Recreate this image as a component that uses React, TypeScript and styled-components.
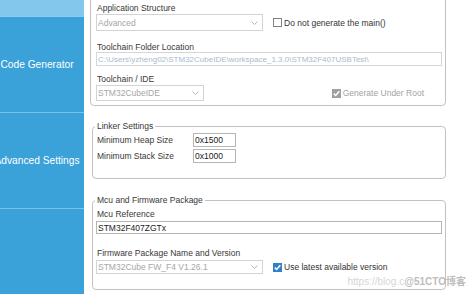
import React from 'react';
import styled, { createGlobalStyle } from 'styled-components';

const GlobalStyle = createGlobalStyle`
  body {
    margin: 0;
  }
`;

const Page = styled.div`
  position: relative;
  display: flex;
  width: 474px;
  height: 294px;
  overflow: hidden;
  background: #fff;
  font-family: 'Liberation Sans', Arial, sans-serif;
  font-size: 8.5px;
  color: #383838;
`;

const Sidebar = styled.div`
  width: 84px;
  flex: none;
  display: flex;
  flex-direction: column;
  background: #3aa1d9;
`;

const SideTop = styled.div`
  height: 16px;
  border-bottom: 1px solid #8ccbee;
  background: #84c7ec;
`;

const SideItem = styled.div`
  height: 95px;
  border-bottom: 1px solid #7cc1e9;
  padding-right: 10px;
  display: flex;
  align-items: center;
  justify-content: center;
  color: #fff;
  font-size: 10.2px;
  white-space: nowrap;
`;

const Main = styled.div`
  flex: 1;
  min-width: 0;
  display: flex;
  flex-direction: column;
  padding: 0 28px 0 6px;
`;

const Panel = styled.div`
  margin-top: -10px;
  padding: 12px 3px 4px 5px;
  border: 1px solid #c2c2c2;
  border-radius: 4px;
  display: flex;
  flex-direction: column;
`;

const Group = styled.fieldset<{ $top: number }>`
  margin: ${(p) => p.$top}px 0 0 2px;
  padding: 2px 3px 15px;
  border: 1px solid #c2c2c2;
  border-radius: 4px;
  min-width: 0;
  display: flex;
  flex-direction: column;
`;

const Legend = styled.legend`
  margin-left: -1px;
  padding: 0 2px;
  line-height: 10px;
  font-size: 8.5px;
  color: #383838;
`;

const Label = styled.div<{ $top?: number }>`
  margin-top: ${(p) => p.$top ?? 0}px;
  padding-left: 1px;
  line-height: 10px;
  white-space: nowrap;
`;

const Row = styled.div<{ $top?: number }>`
  margin-top: ${(p) => p.$top ?? 0}px;
  display: flex;
  align-items: center;
`;

const Select = styled.div<{ $width: number; $height: number }>`
  box-sizing: border-box;
  width: ${(p) => p.$width}px;
  height: ${(p) => p.$height}px;
  flex: none;
  padding: 0 4px 0 1px;
  border: 1px solid #d3d3d3;
  display: flex;
  align-items: center;
  justify-content: space-between;
  color: #a6a6a6;
  white-space: nowrap;
`;

const TextField = styled.div<{ $height: number; $top?: number; $muted?: boolean }>`
  box-sizing: border-box;
  margin-top: ${(p) => p.$top ?? 0}px;
  height: ${(p) => p.$height}px;
  padding: 0 1px;
  border: 1px solid ${(p) => (p.$muted ? '#d6d6d6' : '#b5b5b5')};
  display: flex;
  align-items: center;
  font-size: ${(p) => (p.$muted ? '8px' : 'inherit')};
  color: ${(p) => (p.$muted ? '#a9bbd0' : '#222')};
  white-space: nowrap;
  overflow: hidden;
`;

const CheckRow = styled.div<{ $left?: number; $right?: number; $disabled?: boolean }>`
  margin-left: ${(p) => (p.$left === undefined ? 'auto' : `${p.$left}px`)};
  margin-right: ${(p) => p.$right ?? 0}px;
  display: flex;
  align-items: center;
  gap: 2px;
  color: ${(p) => (p.$disabled ? '#a3a3a3' : '#333')};
  white-space: nowrap;
`;

const Box = styled.span<{ $fill?: string }>`
  box-sizing: border-box;
  width: 9px;
  height: 9px;
  border: 1px solid ${(p) => p.$fill ?? '#808080'};
  background: ${(p) => p.$fill ?? '#fff'};
  display: flex;
  align-items: center;
  justify-content: center;
`;

const LinkerGrid = styled.div`
  display: grid;
  grid-template-columns: 97px 43px;
  grid-auto-rows: 14px;
  row-gap: 2px;
  align-items: center;
`;

const Watermark = styled.div`
  position: absolute;
  right: 8px;
  bottom: 7px;
  line-height: 10px;
  font-size: 10px;
  color: #d6d6d6;
  white-space: nowrap;
  font-family: 'Liberation Sans', 'Noto Sans CJK SC', sans-serif;

  b {
    color: #bdbdbd;
  }
`;

const Chevron = () => (
  <svg width='7' height='4' viewBox='0 0 7 4'>
    <polyline points='0.5,0.5 3.5,3.5 6.5,0.5' fill='none' stroke='#b8b8b8' strokeWidth='1' />
  </svg>
);

const Check = ({ fill }: { fill?: string }) => (
  <Box $fill={fill}>
    {fill && (
      <svg width='7' height='7' viewBox='0 0 7 7'>
        <polyline points='0.8,3.6 2.7,5.5 6.3,1.2' fill='none' stroke='#fff' strokeWidth='1.5' />
      </svg>
    )}
  </Box>
);

const App = () => {
  return (
    <Page>
      <GlobalStyle />
      <Sidebar>
        <SideTop />
        <SideItem>Code Generator</SideItem>
        <SideItem>Advanced Settings</SideItem>
      </Sidebar>
      <Main>
        <Panel>
          <Label>Application Structure</Label>
          <Row $top={1}>
            <Select $width={167} $height={17}>
              Advanced
              <Chevron />
            </Select>
            <CheckRow $left={10}>
              <Check />
              Do not generate the main()
            </CheckRow>
          </Row>
          <Label $top={11}>Toolchain Folder Location</Label>
          <TextField $height={14} $muted>
            C:\Users\yzheng02\STM32CubeIDE\workspace_1.3.0\STM32F407USBTest\
          </TextField>
          <Label $top={8}>Toolchain / IDE</Label>
          <Row $top={1}>
            <Select $width={108} $height={16}>
              STM32CubeIDE
              <Chevron />
            </Select>
            <CheckRow $right={18} $disabled>
              <Check fill='#a0a0a0' />
              Generate Under Root
            </CheckRow>
          </Row>
        </Panel>

        <Group $top={15}>
          <Legend>Linker Settings</Legend>
          <LinkerGrid>
            <Label>Minimum Heap Size</Label>
            <TextField $height={14}>0x1500</TextField>
            <Label>Minimum Stack Size</Label>
            <TextField $height={14}>0x1000</TextField>
          </LinkerGrid>
        </Group>

        <Group $top={16}>
          <Legend>Mcu and Firmware Package</Legend>
          <Label $top={2}>Mcu Reference</Label>
          <TextField $height={13} $top={2}>
            STM32F407ZGTx
          </TextField>
          <Label $top={14}>Firmware Package Name and Version</Label>
          <Row $top={2}>
            <Select $width={167} $height={14}>
              STM32Cube FW_F4 V1.26.1
              <Chevron />
            </Select>
            <CheckRow $left={10}>
              <Check fill='#2f80c8' />
              Use latest available version
            </CheckRow>
          </Row>
        </Group>
      </Main>
      <Watermark>
        https://blog.c<b>@51CTO博客</b>
      </Watermark>
    </Page>
  );
};

export default App;
